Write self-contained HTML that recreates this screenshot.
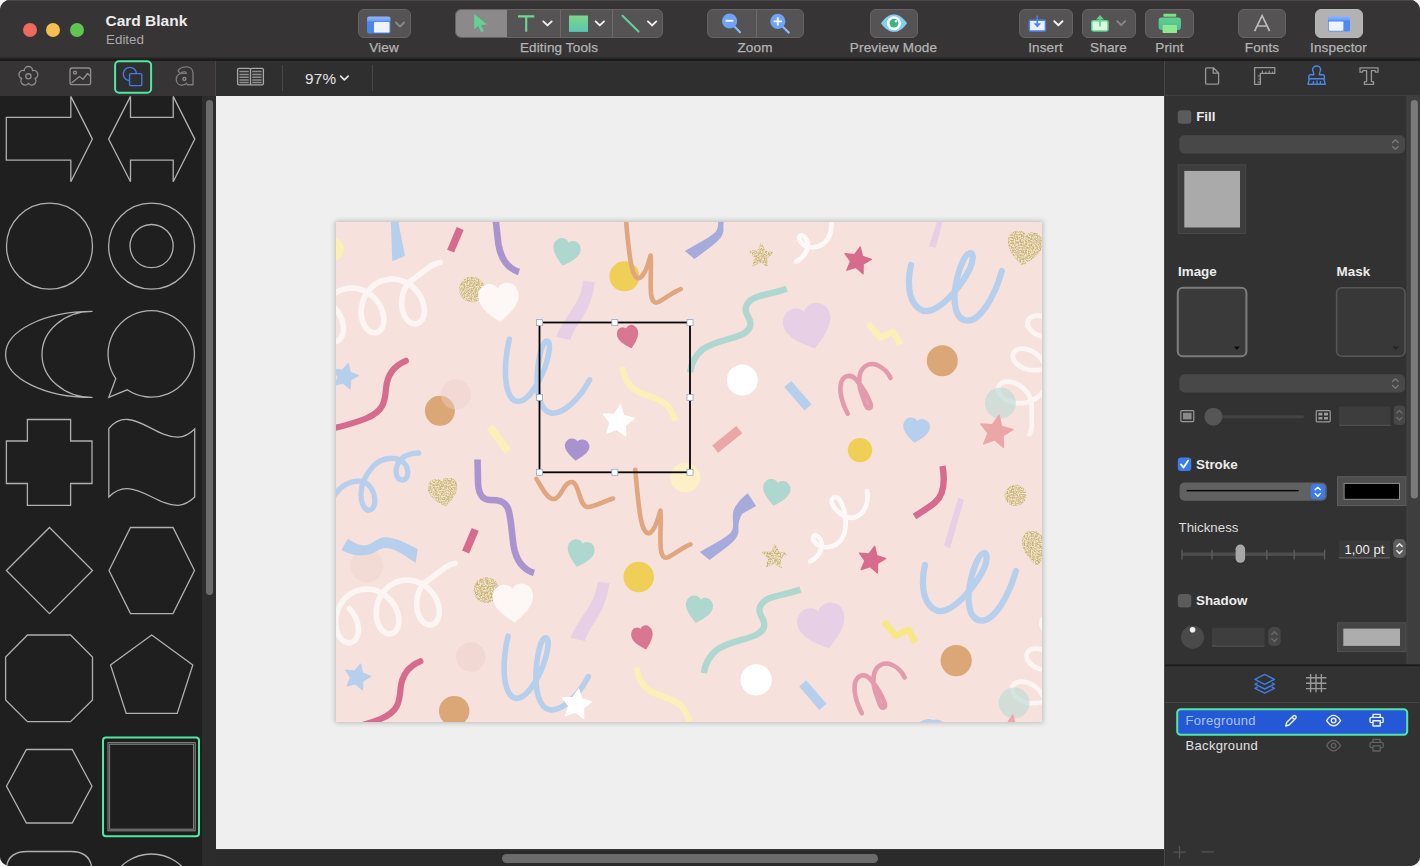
<!DOCTYPE html>
<html>
<head>
<meta charset="utf-8">
<title>Card Blank</title>
<style>
*{box-sizing:border-box;margin:0;padding:0}
html,body{width:1420px;height:866px;overflow:hidden;background:#f4f4f2;font-family:"Liberation Sans",sans-serif;}
#win{position:absolute;left:0;top:0;width:1420px;height:866px;background:#323232;border-radius:10px;overflow:hidden;}
.abs{position:absolute}
/* title bar */
#titlebar{position:absolute;left:0;top:0;width:1420px;height:60.5px;background:linear-gradient(#363435 0,#363435 56.5px,#2a292a 58px,#1b1b1b 59.5px,#1b1b1b 60.5px);box-shadow:inset 0 1px 0 #4a4849;}
.tl{position:absolute;top:22.6px;width:14px;height:14px;border-radius:50%}
#title{position:absolute;left:105.5px;top:12px;font-size:15.5px;font-weight:bold;color:#ececec;letter-spacing:0px}
#subtitle{position:absolute;left:106px;top:31.5px;font-size:13.4px;color:#a9a9a9}
.tbtn{position:absolute;top:9px;height:29px;border-radius:6px;background:#555354;border:1px solid #656364;}
.tlabel{position:absolute;top:40px;font-size:13.5px;letter-spacing:0.15px;-webkit-text-stroke:0.25px #b4b4b4;color:#b4b4b4;text-align:center;width:120px;margin-left:-60px;white-space:nowrap}
.seg{position:absolute;top:0;height:27px;}
.vdiv{position:absolute;top:0;width:1px;height:27px;background:#6d6b6c}
/* second bar */
#bar2{position:absolute;left:0;top:61px;width:1164px;height:35px;background:#363435;border-bottom:1px solid #222;}
/* left */
#left{position:absolute;left:0;top:96px;width:202px;height:770px;background:#201f20;}
#lscroll{position:absolute;left:202px;top:96px;width:14px;height:770px;background:#2c2c2c;}
#canvas{position:absolute;left:216px;top:96px;width:948px;height:753px;background:#efefef;}
#hscroll{position:absolute;left:216px;top:849px;width:948px;height:17px;background:#2b2b2b;border-top:1px solid #383838}
#insp{position:absolute;left:1164px;top:61px;width:256px;height:805px;background:#323232;border-left:1px solid #1e1e1e}
</style>
</head>
<body>
<div id="win">
  <div id="titlebar">
    <div class="tl" style="left:23px;background:#ee6a5f"></div>
    <div class="tl" style="left:46.4px;background:#f5bf4f"></div>
    <div class="tl" style="left:69.7px;background:#61c554"></div>
    <div id="title">Card Blank</div>
    <div id="subtitle">Edited</div>
<!--TB0-->
    <!-- View -->
    <div class="tbtn" style="left:358px;width:53px">
      <svg class="abs" style="left:0;top:0" width="53" height="29" viewBox="358 9 53 29">
        <defs><linearGradient id="gvw" x1="0" y1="0" x2="0" y2="1"><stop offset="0" stop-color="#8fb6fa"/><stop offset="0.28" stop-color="#6a9df6"/><stop offset="0.3" stop-color="#4a86f0"/><stop offset="1" stop-color="#4a86f0"/></linearGradient></defs>
        <rect x="366" y="15.5" width="23.5" height="17" rx="2" fill="url(#gvw)"/>
        <rect x="373" y="21" width="15.5" height="10.5" rx="0.8" fill="#eef3ff"/>
        <path d="M395 21.5 L399 25.5 L403 21.5" fill="none" stroke="#8a8889" stroke-width="1.8" stroke-linecap="round" stroke-linejoin="round"/>
      </svg>
    </div>
    <div class="tlabel" style="left:384px">View</div>
    <!-- Editing tools -->
    <div class="tbtn" style="left:455px;width:208px;overflow:hidden">
      <div class="abs" style="left:0;top:0;width:51px;height:27px;background:#8b898a"></div>
      <div class="vdiv" style="left:104px"></div>
      <div class="vdiv" style="left:156px"></div>
      <svg class="abs" style="left:-1px;top:-1px" width="208" height="29" viewBox="455 9 208 29">
        <defs><linearGradient id="gsq" x1="0" y1="0" x2="0" y2="1"><stop offset="0" stop-color="#7dd88a"/><stop offset="1" stop-color="#5ac4b2"/></linearGradient>
        <linearGradient id="gar" x1="0" y1="0" x2="0" y2="1"><stop offset="0" stop-color="#68d48a"/><stop offset="1" stop-color="#5fcf9c"/></linearGradient></defs>
        <path d="M474.2 14 L474.2 29.5 L478.3 26 L481.2 32.3 L483.9 31.1 L481 25 L487 24.6 Z" fill="url(#gar)"/>
        <path d="M518 16.4 H534.3 M526.2 16.4 V31.8" fill="none" stroke="#6fd993" stroke-width="2.1"/>
        <path d="M543.3 21.4 L547.5 25.4 L551.7 21.4" fill="none" stroke="#f2f2f2" stroke-width="1.9" stroke-linecap="round" stroke-linejoin="round"/>
        <rect x="569" y="15.5" width="19" height="16.4" fill="url(#gsq)"/>
        <path d="M595.6 21.4 L599.8 25.4 L604 21.4" fill="none" stroke="#f2f2f2" stroke-width="1.9" stroke-linecap="round" stroke-linejoin="round"/>
        <path d="M622.5 15.8 L638.5 31.6" fill="none" stroke="#62cf9e" stroke-width="2.1" stroke-linecap="round"/>
        <path d="M647.9 21.4 L652.1 25.4 L656.3 21.4" fill="none" stroke="#f2f2f2" stroke-width="1.9" stroke-linecap="round" stroke-linejoin="round"/>
      </svg>
    </div>
    <div class="tlabel" style="left:559px">Editing Tools</div>
    <!-- Zoom -->
    <div class="tbtn" style="left:707px;width:97px">
      <div class="vdiv" style="left:48px"></div>
      <svg class="abs" style="left:-1px;top:-1px" width="97" height="29" viewBox="707 9 97 29">
        <path d="M734.5 26.5 L740 32.3" stroke="#8db6f8" stroke-width="2.2" stroke-linecap="round"/>
        <circle cx="729.6" cy="21" r="7.6" fill="#6ea3f6"/>
        <path d="M725.6 20.8 H733.4" stroke="#f4f7ff" stroke-width="1.9"/>
        <path d="M783 27 L788.8 32.6" stroke="#8db6f8" stroke-width="2.2" stroke-linecap="round"/>
        <circle cx="777.8" cy="21.4" r="7.6" fill="#6ea3f6"/>
        <path d="M773.6 21.4 H782 M777.8 17.2 V25.6" stroke="#f4f7ff" stroke-width="1.9"/>
      </svg>
    </div>
    <div class="tlabel" style="left:755px">Zoom</div>
    <!-- Preview -->
    <div class="tbtn" style="left:870px;width:48px">
      <svg class="abs" style="left:-1px;top:-1px" width="48" height="29" viewBox="870 9 48 29">
        <path d="M881 23.2 C885.5 17 889.5 14.6 894 14.6 C898.5 14.6 902.5 17 907 23.2 C902.5 29.4 898.5 31.8 894 31.8 C889.5 31.8 885.5 29.4 881 23.2 Z" fill="#86cdf2"/>
        <circle cx="894" cy="23.2" r="7" fill="#f4fbff"/>
        <circle cx="894" cy="23.2" r="4.4" fill="#43b07f"/>
        <circle cx="896" cy="21.3" r="1.3" fill="#e8fff2"/>
      </svg>
    </div>
    <div class="tlabel" style="left:893.5px">Preview Mode</div>
    <!-- Insert -->
    <div class="tbtn" style="left:1019px;width:54px">
      <svg class="abs" style="left:-1px;top:-1px" width="54" height="29" viewBox="1019 9 54 29">
        <rect x="1029.4" y="20.3" width="16" height="10.8" rx="1" fill="#e9f0ff" stroke="#4c84ee" stroke-width="1.5"/>
        <path d="M1037.3 15.5 V25" stroke="#4c84ee" stroke-width="1.6"/>
        <path d="M1033.6 23.2 H1041 L1037.3 27.6 Z" fill="#4c84ee"/>
        <path d="M1054.3 21.2 L1058.4 25.2 L1062.5 21.2" fill="none" stroke="#f2f2f2" stroke-width="1.9" stroke-linecap="round" stroke-linejoin="round"/>
      </svg>
    </div>
    <div class="tlabel" style="left:1045.5px">Insert</div>
    <!-- Share -->
    <div class="tbtn" style="left:1082px;width:54px">
      <svg class="abs" style="left:-1px;top:-1px" width="54" height="29" viewBox="1082 9 54 29">
        <rect x="1091.8" y="20.8" width="16.2" height="10.2" rx="1.4" fill="#d9f9e2" stroke="#62d28c" stroke-width="1.5"/>
        <path d="M1100 18.5 V26.5" stroke="#62d28c" stroke-width="1.7"/>
        <path d="M1096 19.6 H1104 L1100 15 Z" fill="#62d28c"/>
        <path d="M1117.2 21.2 L1121.2 25.2 L1125.2 21.2" fill="none" stroke="#8a8889" stroke-width="1.8" stroke-linecap="round" stroke-linejoin="round"/>
      </svg>
    </div>
    <div class="tlabel" style="left:1108.5px">Share</div>
    <!-- Print -->
    <div class="tbtn" style="left:1145px;width:49px">
      <svg class="abs" style="left:-1px;top:-1px" width="49" height="29" viewBox="1145 9 49 29">
        <defs><linearGradient id="gpr" x1="0" y1="0" x2="0" y2="1"><stop offset="0" stop-color="#62cf8c"/><stop offset="1" stop-color="#4dbb98"/></linearGradient></defs>
        <rect x="1163.4" y="13.8" width="12.8" height="3" rx="0.8" fill="#7fe08c"/>
        <rect x="1158.6" y="17.6" width="22.4" height="12.4" rx="3" fill="url(#gpr)"/>
        <rect x="1162.6" y="25" width="14.4" height="8" rx="0.8" fill="#8dea8e"/>
      </svg>
    </div>
    <div class="tlabel" style="left:1169.5px">Print</div>
    <!-- Fonts -->
    <div class="tbtn" style="left:1238px;width:48px">
      <svg class="abs" style="left:-1px;top:-1px" width="48" height="29" viewBox="1238 9 48 29">
        <path d="M1254.6 31.2 L1262.1 15.6 L1269.6 31.2 M1257.2 26 H1267" fill="none" stroke="#bcbcbc" stroke-width="1.7" stroke-linejoin="miter"/>
      </svg>
    </div>
    <div class="tlabel" style="left:1262px">Fonts</div>
    <!-- Inspector -->
    <div class="tbtn" style="left:1315px;width:48px;background:#b2b2b2;border-color:#b8b8b8">
      <svg class="abs" style="left:-1px;top:-1px" width="48" height="29" viewBox="1315 9 48 29">
        <defs><linearGradient id="gin" x1="0" y1="0" x2="0" y2="1"><stop offset="0" stop-color="#8fb6fa"/><stop offset="0.28" stop-color="#6a9df6"/><stop offset="0.3" stop-color="#4a86f0"/><stop offset="1" stop-color="#4f8df5"/></linearGradient></defs>
        <rect x="1328" y="16" width="22" height="15.5" rx="1.6" fill="url(#gin)"/>
        <rect x="1328.8" y="21.4" width="14.6" height="9.3" rx="0.8" fill="#eef3ff"/>
      </svg>
    </div>
    <div class="tlabel" style="left:1338.5px">Inspector</div>
<!--TB1-->
  </div>
  <div id="bar2">
<!--B20-->
    <svg class="abs" style="left:0;top:0;overflow:visible" width="1420" height="35" viewBox="0 61 1420 35">
      <rect x="0" y="61" width="215" height="35" fill="#363435"/>
      <rect x="216" y="61" width="948" height="35" fill="#2f2f2f"/>
      <rect x="215" y="61" width="1" height="35" fill="#474747"/>
      <!-- flower -->
      <g fill="none" stroke="#8c8c8c" stroke-width="1.4" stroke-linejoin="round">
        <path d="M24.25 70.59 A4.15 4.15 0 0 1 32.55 70.59 A4.15 4.15 0 0 1 35.11 78.48 A4.15 4.15 0 0 1 28.40 83.36 A4.15 4.15 0 0 1 21.69 78.48 A4.15 4.15 0 0 1 24.25 70.59 Z"/>
        <circle cx="28.4" cy="76.3" r="2.6"/>
        <!-- image -->
        <rect x="70" y="68" width="20.6" height="16.6" rx="2.2"/>
        <circle cx="75" cy="72.6" r="1.5"/>
        <path d="M71.5 83 L79.5 76.5 L83 79.3 L87.5 73.5 L90.3 76"/>
        <!-- a -->
        <path d="M178 70.600 C180 67.800 183.600 66.900 186.400 66.900 C190.600 66.900 193 69.600 193 73.200 V84.800 H187.600 L186.600 83.300 C185.200 84.600 183.400 85.200 181.700 85.200 C178.500 85.200 176.300 82.800 176.300 79.500 C176.300 75.700 179 73.400 183 73.400 H186.300 C186.300 72.200 185.500 71.600 184.300 71.600 C182.800 71.600 181.500 72.300 180.200 73.600 Z" stroke="#7a7a7a"/>
        <circle cx="184.400" cy="78.900" r="1.500" stroke="#8a8a8a"/>
      </g>
      <!-- selected shapes -->
      <rect x="115.1" y="61.3" width="36" height="31.5" rx="4" fill="#302f30" stroke="#4fe8a4" stroke-width="2"/>
      <circle cx="129.9" cy="74" r="6.6" fill="none" stroke="#3f7be2" stroke-width="1.4"/>
      <rect x="129.6" y="73.6" width="12.2" height="12" rx="1.2" fill="#302f30" stroke="#3f7be2" stroke-width="1.4"/>
      <!-- book -->
      <g fill="none" stroke="#a9a9a9" stroke-width="1.3">
        <path d="M237.6 69.8 Q237.6 68.4 239 68.4 H249 Q250.5 68.4 250.5 69.8 Q250.5 68.4 252 68.4 H262 Q263.4 68.4 263.4 69.8 V83.4 Q263.4 84.8 262 84.8 H252 Q250.5 84.8 250.5 85.6 Q250.5 84.8 249 84.8 H239 Q237.6 84.8 237.6 83.4 Z"/>
        <path d="M250.5 69.5 V85"/>
      </g>
      <g stroke="#8f8f8f" stroke-width="1.5">
        <path d="M239.4 71.6 H248.8 M239.4 74.4 H248.8 M239.4 77.2 H248.8 M239.4 80 H248.8 M239.4 82.6 H248.8"/>
        <path d="M252.2 71.6 H261.6 M252.2 74.4 H261.6 M252.2 77.2 H261.6 M252.2 80 H261.6 M252.2 82.6 H261.6"/>
      </g>
      <rect x="282" y="65" width="1" height="26" fill="#474747"/>
      <rect x="372" y="65" width="1" height="26" fill="#474747"/>
      <path d="M340.6 76.2 L344.4 79.8 L348.2 76.2" fill="none" stroke="#e4e4e4" stroke-width="1.7" stroke-linecap="round" stroke-linejoin="round"/>
    </svg>
    <div class="abs" style="left:305px;top:8.6px;font-size:15.3px;color:#e4e4e4;letter-spacing:0.2px">97%</div>
<!--B21-->
  </div>
  <div id="left">
<!--S0-->
    <svg class="abs" style="left:0;top:0" width="203" height="770" viewBox="0 96 203 770">
      <g fill="none" stroke="#b0b0b0" stroke-width="1.3" stroke-linejoin="miter">
        <!-- row1 -->
        <path d="M6.3 117.4 H70.8 V96.4 L92.4 139.1 L70.8 181.8 V160.1 H6.3 Z"/>
        <path d="M108.6 139.1 L130.5 96.4 V117.4 H173.2 V96.4 L194.8 139.1 L173.2 181.8 V160.1 H130.5 V181.8 Z"/>
        <!-- row2 -->
        <circle cx="49.5" cy="246.1" r="43"/>
        <circle cx="151.6" cy="246.1" r="43"/>
        <circle cx="151.6" cy="246.1" r="21.6"/>
        <!-- row3 -->
        <path d="M92 311.4 A86.4 43 0 0 0 92 397.4 A50 43 0 0 1 92 311.4 Z" stroke-linejoin="round"/>
        <path d="M115.800 378.600 A43.200 43.200 0 1 1 127.200 389.800 L108.800 397.300 Z"/>
        <!-- row4 -->
        <path d="M27.400 419.500 H70.600 V441 H92 V483.500 H70.600 V505.300 H27.400 V483.500 H6.400 V441 H27.400 Z"/>
        <path d="M108.800 428.500 C115 421 122 419 128 419.500 C145 421 160 437.500 178 437.200 C185 437 190 433.500 194.700 429 V497 C190 501.500 185 505 178 505.300 C160 505.500 145 489.500 128 488.600 C122 488.300 115 490.500 108.800 497 Z"/>
        <!-- row5 -->
        <path d="M49.500 527.500 L92.500 570.500 L49.500 613.600 L6.400 570.500 Z"/>
        <path d="M109 570.500 L130.500 527.500 H173 L194.500 570.500 L173 613.600 H130.500 Z"/>
        <!-- row6 -->
        <path d="M27.500 635 H70.500 L92.500 657 V700 L70.500 721.700 H27.500 L5.600 700 V657 Z"/>
        <path d="M151.700 635 L192.800 665 L177.200 713.400 H126.200 L110.500 665 Z"/>
        <!-- row7 -->
        <path d="M6.500 786.200 L26.400 749.500 H72.200 L92 786.200 L72.200 823 H26.400 Z"/>
        <!-- row8 -->
        <path d="M6 880 V872 Q6 851.500 27 851.500 H71 Q92 851.500 92 872 V880"/>
        <path d="M112 880 A43 43 0 0 1 191 880"/>
      </g>
      <rect x="103" y="737.600" width="96" height="98.600" rx="3" fill="#1f1e1f" stroke="#4fe8a4" stroke-width="2"/>
      <rect x="108.800" y="743.400" width="85.600" height="86.600" fill="none" stroke="#8e8e8e" stroke-width="2.6"/>
      <rect x="108.800" y="743.400" width="85.600" height="86.600" fill="none" stroke="#3a3a3a" stroke-width="0.9"/>
    </svg>
<!--S1-->
  </div>
  <div id="lscroll"><div class="abs" style="left:3.8px;top:3.8px;width:6.8px;height:495px;border-radius:4px;background:#6b6b6b"></div></div>
  <div id="canvas">
<!--C0-->
<div class="abs" style="left:120px;top:125.5px;width:706px;height:500.5px;box-shadow:0 0 5px 1px rgba(0,0,0,0.22);background:#f6e1dd"></div>
<svg class="abs" style="left:120px;top:125.5px" width="706" height="500.5" viewBox="336 221.5 706 500.5">
<defs>
<filter id="gf" x="0" y="0" width="1" height="1" color-interpolation-filters="sRGB">
<feTurbulence type="fractalNoise" baseFrequency="0.55" numOctaves="2" seed="7" result="n"/>
<feColorMatrix in="n" type="matrix" values="0 0 0 0 0.86  0 0 0 0 0.78  0 0 0 0 0.58  1.9 1.9 0 0 -1.5" result="spk"/>
<feTurbulence type="fractalNoise" baseFrequency="0.7" numOctaves="2" seed="23" result="n2"/>
<feColorMatrix in="n2" type="matrix" values="0 0 0 0 0.94  0 0 0 0 0.9  0 0 0 0 0.8  0 2.4 2.4 0 -1.95" result="lt"/>
<feFlood flood-color="#c6ab72" result="base"/>
<feMerge result="m"><feMergeNode in="base"/><feMergeNode in="spk"/><feMergeNode in="lt"/></feMerge>
<feComposite in="m" in2="SourceGraphic" operator="in"/>
</filter>
<clipPath id="cardclip"><rect x="336" y="221.5" width="706" height="500.5"/></clipPath>
</defs>
<rect x="336" y="221.5" width="706" height="500.5" fill="#f6e1dd"/>
<g clip-path="url(#cardclip)">
<circle cx="455.8" cy="394.0" r="15.0" fill="#eed2ca" opacity="0.55"/>
<circle cx="366.8" cy="565.3" r="16.5" fill="#efd2ca" opacity="0.4"/>
<circle cx="470.8" cy="656.6" r="14.8" fill="#efd2ca" opacity="0.55"/>
<circle cx="331.0" cy="248.8" r="12.7" fill="#fdf0b4" />
<polygon points="390.8,221.0 398.3,221.0 405.0,255.5 392.3,260.8" fill="#b6cfec" />
<rect x="451.6" y="227.1" width="7.6" height="24.5" transform="rotate(23.0 455.4 239.3)" fill="#d66b8e"/>
<rect x="466.6" y="528.0" width="7.6" height="24.5" transform="rotate(23.0 470.4 540.3)" fill="#d66b8e"/>
<path d="M477.5 459.0 L478.0 480.0 C478.0 492.0 481.0 499.0 490.0 499.5 C496.0 499.5 504.0 499.0 508.0 508.0 C511.0 516.0 511.5 530.0 513.5 545.0 C516.0 560.0 523.0 569.0 534.0 572.5" fill="none" stroke="#ab93cf" stroke-width="6.6" stroke-linecap="butt" stroke-linejoin="round" />
<path d="M462.5 158.0 L463.0 179.0 C463.0 191.0 466.0 198.0 475.0 198.5 C481.0 198.5 489.0 198.0 493.0 207.0 C496.0 215.0 496.5 229.0 498.5 244.0 C501.0 259.0 508.0 268.0 519.0 271.5" fill="none" stroke="#ab93cf" stroke-width="6.6" stroke-linecap="butt" stroke-linejoin="round" />
<path d="M440.0 261.9 L435.2 263.4 L430.5 265.6 L426.6 268.8 L407.8 282.8 L406.3 285.3 L405.0 287.8 L403.9 290.4 L403.0 293.1 L402.3 295.8 L401.9 298.6 L401.7 301.3 L401.7 303.9 L401.9 306.5 L402.3 309.0 L402.9 311.3 L403.7 313.5 L404.6 315.6 L405.7 317.4 L406.9 319.0 L408.2 320.4 L409.6 321.5 L411.0 322.4 L412.5 323.0 L413.9 323.3 L415.4 323.4 L416.8 323.2 L418.2 322.7 L419.4 322.0 L420.6 321.0 L421.6 319.8 L422.5 318.4 L423.3 316.7 L423.8 314.9 L424.2 312.9 L424.3 310.8 L424.3 308.5 L424.0 306.2 L423.5 303.8 L422.8 301.4 L421.9 299.0 L420.7 296.5 L419.4 294.2 L417.8 291.9 L416.0 289.7 L414.0 287.7 L411.9 285.8 L409.6 284.1 L407.1 282.6 L404.6 281.3 L401.9 280.3 L399.2 279.5 L396.4 278.9 L393.6 278.6 L390.8 278.6 L388.0 278.9 L385.2 279.4 L382.5 280.2 L379.9 281.2 L377.4 282.5 L375.0 284.0 L372.8 285.8 L370.7 287.8 L368.8 289.9 L367.1 292.2 L365.6 294.6 L364.3 297.2 L363.2 299.8 L362.4 302.5 L361.8 305.2 L361.4 308.0 L361.2 310.7 L361.2 313.3 L361.5 315.9 L361.9 318.4 L362.6 320.7 L363.4 322.9 L364.3 324.8 L365.4 326.6 L366.6 328.2 L367.9 329.5 L369.3 330.6 L370.7 331.5 L372.2 332.0 L373.7 332.3 L375.1 332.3 L376.5 332.1 L377.9 331.6 L379.1 330.8 L380.3 329.8 L381.3 328.6 L382.2 327.1 L382.9 325.4 L383.4 323.6 L383.7 321.6 L383.9 319.4 L383.8 317.1 L383.5 314.8 L383.0 312.4 L382.2 310.0 L381.2 307.5 L380.0 305.1 L378.6 302.8 L377.0 300.5 L375.2 298.4 L373.2 296.4 L371.0 294.5 L368.7 292.8 L366.2 291.4 L363.7 290.1 L361.0 289.1 L358.3 288.3 L355.5 287.8 L352.7 287.6 L349.8 287.6 L347.0 287.9 L344.3 288.5 L341.6 289.3 L339.0 290.4 L336.5 291.7 L334.1 293.3 L331.9 295.1 L329.9 297.1 L328.0 299.2 L326.4 301.6 L324.9 304.0 L323.6 306.6 L322.6 309.2 L321.8 311.9 L321.2 314.7 L320.8 317.4 L320.7 320.1 L320.8 322.7 L321.1 325.3 L321.5 327.7 L322.2 330.0 L323.0 332.2 L324.0 334.1 L325.1 335.9 L326.3 337.4 L327.7 338.7 L329.1 339.7 L330.5 340.5 L332.0 341.1 L333.4 341.3 L334.9 341.3 L336.3 341.0 L337.6 340.5 L338.8 339.7 L340.0 338.6 L341.0 337.3 L341.8 335.8 L342.5 334.1 L343.0 332.2 L343.3 330.2 L343.4 328.0 L343.3 325.7 L342.9 323.4 L342.4 321.0 L341.6 318.6 L340.6 316.1 L339.3 313.7 L337.9 311.4 L336.2 309.2 L334.4 307.0" fill="none" stroke="#fdf5f3" stroke-width="5.6" stroke-linecap="round" stroke-linejoin="round" />
<path d="M455.0 562.9 L450.2 564.4 L445.5 566.6 L441.6 569.8 L422.8 583.8 L421.3 586.3 L420.0 588.8 L418.9 591.4 L418.0 594.1 L417.3 596.8 L416.9 599.6 L416.7 602.3 L416.7 604.9 L416.9 607.5 L417.3 610.0 L417.9 612.3 L418.7 614.5 L419.6 616.6 L420.7 618.4 L421.9 620.0 L423.2 621.4 L424.6 622.5 L426.0 623.4 L427.5 624.0 L428.9 624.3 L430.4 624.4 L431.8 624.2 L433.2 623.7 L434.4 623.0 L435.6 622.0 L436.6 620.8 L437.5 619.4 L438.3 617.7 L438.8 615.9 L439.2 613.9 L439.3 611.8 L439.3 609.5 L439.0 607.2 L438.5 604.8 L437.8 602.4 L436.9 600.0 L435.7 597.5 L434.4 595.2 L432.8 592.9 L431.0 590.7 L429.0 588.7 L426.9 586.8 L424.6 585.1 L422.1 583.6 L419.6 582.3 L416.9 581.3 L414.2 580.5 L411.4 579.9 L408.6 579.6 L405.8 579.6 L403.0 579.9 L400.2 580.4 L397.5 581.2 L394.9 582.2 L392.4 583.5 L390.0 585.0 L387.8 586.8 L385.7 588.8 L383.8 590.9 L382.1 593.2 L380.6 595.6 L379.3 598.2 L378.2 600.8 L377.4 603.5 L376.8 606.2 L376.4 609.0 L376.2 611.7 L376.2 614.3 L376.5 616.9 L376.9 619.4 L377.6 621.7 L378.4 623.9 L379.3 625.8 L380.4 627.6 L381.6 629.2 L382.9 630.5 L384.3 631.6 L385.7 632.5 L387.2 633.0 L388.7 633.3 L390.1 633.3 L391.5 633.1 L392.9 632.6 L394.1 631.8 L395.3 630.8 L396.3 629.6 L397.2 628.1 L397.9 626.4 L398.4 624.6 L398.7 622.6 L398.9 620.4 L398.8 618.1 L398.5 615.8 L398.0 613.4 L397.2 611.0 L396.2 608.5 L395.0 606.1 L393.6 603.8 L392.0 601.5 L390.2 599.4 L388.2 597.4 L386.0 595.5 L383.7 593.8 L381.2 592.4 L378.7 591.1 L376.0 590.1 L373.3 589.3 L370.5 588.8 L367.7 588.6 L364.8 588.6 L362.0 588.9 L359.3 589.5 L356.6 590.3 L354.0 591.4 L351.5 592.7 L349.1 594.3 L346.9 596.1 L344.9 598.1 L343.0 600.2 L341.4 602.6 L339.9 605.0 L338.6 607.6 L337.6 610.2 L336.8 612.9 L336.2 615.7 L335.8 618.4 L335.7 621.1 L335.8 623.7 L336.1 626.3 L336.5 628.7 L337.2 631.0 L338.0 633.2 L339.0 635.1 L340.1 636.9 L341.3 638.4 L342.7 639.7 L344.1 640.7 L345.5 641.5 L347.0 642.1 L348.4 642.3 L349.9 642.3 L351.3 642.0 L352.6 641.5 L353.8 640.7 L355.0 639.6 L356.0 638.3 L356.8 636.8 L357.5 635.1 L358.0 633.2 L358.3 631.2 L358.4 629.0 L358.3 626.7 L357.9 624.4 L357.4 622.0 L356.6 619.6 L355.6 617.1 L354.3 614.7 L352.9 612.4 L351.2 610.2 L349.4 608.0" fill="none" stroke="#fdf5f3" stroke-width="5.6" stroke-linecap="round" stroke-linejoin="round" />
<path d="M1029.6 433.7 L1031.1 429.6 L1031.9 425.2 L1031.7 420.9 L1031.6 400.4 L1030.7 398.1 L1029.6 395.9 L1028.3 393.7 L1026.9 391.7 L1025.4 389.9 L1023.7 388.2 L1021.9 386.6 L1020.0 385.2 L1018.1 384.0 L1016.1 383.1 L1014.2 382.3 L1012.3 381.7 L1010.4 381.3 L1008.5 381.1 L1006.8 381.1 L1005.2 381.3 L1003.7 381.7 L1002.3 382.2 L1001.1 382.9 L1000.1 383.8 L999.3 384.7 L998.7 385.8 L998.4 387.0 L998.2 388.3 L998.3 389.6 L998.6 391.0 L999.1 392.3 L999.9 393.7 L1000.9 395.0 L1002.1 396.3 L1003.5 397.5 L1005.1 398.7 L1006.9 399.7 L1008.8 400.6 L1010.9 401.3 L1013.1 401.9 L1015.3 402.4 L1017.7 402.6 L1020.1 402.7 L1022.5 402.6 L1025.0 402.2 L1027.4 401.7 L1029.8 401.0 L1032.1 400.1 L1034.3 398.9 L1036.4 397.6 L1038.4 396.1 L1040.2 394.5 L1041.9 392.7 L1043.4 390.7 L1044.7 388.6 L1045.7 386.4 L1046.6 384.1 L1047.2 381.7 L1047.6 379.3 L1047.7 376.9 L1047.7 374.4 L1047.4 371.9 L1046.9 369.5 L1046.1 367.1 L1045.2 364.8 L1044.1 362.6 L1042.8 360.5 L1041.3 358.5 L1039.8 356.6 L1038.1 354.9 L1036.3 353.4 L1034.4 352.1 L1032.5 350.9 L1030.5 350.0 L1028.6 349.2 L1026.6 348.6 L1024.7 348.3 L1022.9 348.1 L1021.2 348.1 L1019.6 348.4 L1018.1 348.8 L1016.8 349.3 L1015.6 350.1 L1014.7 350.9 L1013.9 351.9 L1013.3 353.1 L1013.0 354.3 L1012.9 355.5 L1013.0 356.9 L1013.4 358.2 L1013.9 359.6 L1014.7 360.9 L1015.8 362.3 L1017.0 363.6 L1018.4 364.8 L1020.1 365.9 L1021.8 366.9 L1023.8 367.7 L1025.9 368.5 L1028.1 369.1 L1030.4 369.5 L1032.8 369.7 L1035.2 369.7 L1037.6 369.6 L1040.1 369.2 L1042.5 368.7 L1044.8 367.9 L1047.1 366.9 L1049.4 365.8 L1051.4 364.4 L1053.4 362.9 L1055.2 361.2 L1056.8 359.4 L1058.3 357.4 L1059.5 355.3 L1060.5 353.1 L1061.4 350.8 L1061.9 348.4 L1062.3 346.0 L1062.4 343.5 L1062.3 341.0 L1062.0 338.6 L1061.4 336.1 L1060.7 333.8 L1059.7 331.5 L1058.6 329.3 L1057.2 327.2 L1055.8 325.2 L1054.2 323.4 L1052.5 321.7 L1050.6 320.2 L1048.8 318.9 L1046.8 317.8 L1044.9 316.9 L1042.9 316.1 L1041.0 315.6 L1039.1 315.3 L1037.3 315.1 L1035.6 315.2 L1034.0 315.5 L1032.6 315.9 L1031.3 316.5 L1030.1 317.2 L1029.2 318.1 L1028.5 319.2 L1027.9 320.3 L1027.6 321.5 L1027.6 322.8 L1027.7 324.1 L1028.1 325.5 L1028.7 326.8 L1029.6 328.2 L1030.6 329.5 L1031.9 330.8 L1033.3 332.0 L1035.0 333.1 L1036.8 334.1 L1038.8 334.9 L1040.9 335.6 L1043.1 336.2 L1045.4 336.5 L1047.8 336.7 L1050.2 336.8 L1052.7 336.6" fill="none" stroke="#fdf5f3" stroke-width="4.7" stroke-linecap="round" stroke-linejoin="round" />
<path d="M1043.4 733.7 L1044.9 729.6 L1045.7 725.2 L1045.5 720.9 L1045.4 700.4 L1044.5 698.1 L1043.4 695.9 L1042.1 693.7 L1040.7 691.7 L1039.2 689.9 L1037.5 688.2 L1035.7 686.6 L1033.8 685.2 L1031.9 684.0 L1029.9 683.1 L1028.0 682.3 L1026.1 681.7 L1024.2 681.3 L1022.3 681.1 L1020.6 681.1 L1019.0 681.3 L1017.5 681.7 L1016.1 682.2 L1014.9 682.9 L1013.9 683.8 L1013.1 684.7 L1012.5 685.8 L1012.2 687.0 L1012.0 688.3 L1012.1 689.6 L1012.4 691.0 L1012.9 692.3 L1013.7 693.7 L1014.7 695.0 L1015.9 696.3 L1017.3 697.5 L1018.9 698.7 L1020.7 699.7 L1022.6 700.6 L1024.7 701.3 L1026.9 701.9 L1029.1 702.4 L1031.5 702.6 L1033.9 702.7 L1036.3 702.6 L1038.8 702.2 L1041.2 701.7 L1043.6 701.0 L1045.9 700.1 L1048.1 698.9 L1050.2 697.6 L1052.2 696.1 L1054.0 694.5 L1055.7 692.7 L1057.2 690.7 L1058.5 688.6 L1059.5 686.4 L1060.4 684.1 L1061.0 681.7 L1061.4 679.3 L1061.5 676.9 L1061.5 674.4 L1061.2 671.9 L1060.7 669.5 L1059.9 667.1 L1059.0 664.8 L1057.9 662.6 L1056.6 660.5 L1055.1 658.5 L1053.6 656.6 L1051.9 654.9 L1050.1 653.4 L1048.2 652.1 L1046.3 650.9 L1044.3 650.0 L1042.4 649.2 L1040.4 648.6 L1038.5 648.3 L1036.7 648.1 L1035.0 648.1 L1033.4 648.4 L1031.9 648.8 L1030.6 649.3 L1029.4 650.1 L1028.5 650.9 L1027.7 651.9 L1027.1 653.1 L1026.8 654.3 L1026.7 655.5 L1026.8 656.9 L1027.2 658.2 L1027.7 659.6 L1028.5 660.9 L1029.6 662.3 L1030.8 663.6 L1032.2 664.8 L1033.9 665.9 L1035.6 666.9 L1037.6 667.7 L1039.7 668.5 L1041.9 669.1 L1044.2 669.5 L1046.6 669.7 L1049.0 669.7 L1051.4 669.6 L1053.9 669.2 L1056.3 668.7 L1058.6 667.9 L1060.9 666.9 L1063.2 665.8 L1065.2 664.4 L1067.2 662.9 L1069.0 661.2 L1070.6 659.4 L1072.1 657.4 L1073.3 655.3 L1074.3 653.1 L1075.2 650.8 L1075.7 648.4 L1076.1 646.0 L1076.2 643.5 L1076.1 641.0 L1075.8 638.6 L1075.2 636.1 L1074.5 633.8 L1073.5 631.5 L1072.4 629.3 L1071.0 627.2 L1069.6 625.2 L1068.0 623.4 L1066.3 621.7 L1064.4 620.2 L1062.6 618.9 L1060.6 617.8 L1058.7 616.9 L1056.7 616.1 L1054.8 615.6 L1052.9 615.3 L1051.1 615.1 L1049.4 615.2 L1047.8 615.5 L1046.4 615.9 L1045.1 616.5 L1043.9 617.2 L1043.0 618.1 L1042.3 619.2 L1041.7 620.3 L1041.4 621.5 L1041.4 622.8 L1041.5 624.1 L1041.9 625.5 L1042.5 626.8 L1043.4 628.2 L1044.4 629.5 L1045.7 630.8 L1047.1 632.0 L1048.8 633.1 L1050.6 634.1 L1052.6 634.9 L1054.7 635.6 L1056.9 636.2 L1059.2 636.5 L1061.6 636.7 L1064.0 636.8 L1066.5 636.6" fill="none" stroke="#fdf5f3" stroke-width="4.7" stroke-linecap="round" stroke-linejoin="round" />
<circle cx="471.9" cy="289.0" r="12.8" fill="#d9bd7e" filter="url(#gf)" />
<path d="M 500.1 320.3 C 494.0 316.0 480.0 307.9 479.2 297.0 C 478.7 289.4 483.8 284.9 488.7 284.6 C 492.8 284.3 496.2 286.3 498.0 290.0 C 499.3 286.1 502.4 283.6 506.4 283.3 C 511.4 283.0 517.1 286.7 517.6 294.3 C 518.4 305.2 505.6 315.2 500.1 320.3 Z" fill="#fdf7f5" stroke="#fdf7f5" stroke-width="2" stroke-linejoin="round" />
<circle cx="486.4" cy="589.6" r="12.8" fill="#d9bd7e" filter="url(#gf)" />
<path d="M 514.6 620.9 C 508.5 616.6 494.5 608.5 493.7 597.6 C 493.2 590.0 498.3 585.5 503.2 585.2 C 507.3 584.9 510.7 586.9 512.5 590.6 C 513.8 586.7 516.9 584.2 520.9 583.9 C 525.9 583.6 531.6 587.3 532.1 594.9 C 532.9 605.8 520.1 615.8 514.6 620.9 Z" fill="#fdf7f5" stroke="#fdf7f5" stroke-width="2" stroke-linejoin="round" />
<polygon points="348.3,362.9 350.2,371.7 358.5,375.1 350.7,379.6 350.1,388.5 343.4,382.5 334.7,384.7 338.3,376.5 333.6,368.8 342.5,369.7" fill="#b6cfec" stroke="#b6cfec" stroke-width="1.2" stroke-linejoin="round" />
<polygon points="360.6,663.7 362.5,672.5 370.8,675.9 363.0,680.4 362.4,689.3 355.7,683.3 347.0,685.5 350.6,677.3 345.9,669.6 354.8,670.5" fill="#b6cfec" stroke="#b6cfec" stroke-width="1.2" stroke-linejoin="round" />
<path d="M405.8 360.3 C392.0 366.0 387.0 376.0 386.0 388.0 C385.0 402.0 383.0 411.0 366.0 418.0 C352.0 423.5 344.0 425.5 330.0 428.5 " fill="none" stroke="#d66b8e" stroke-width="6.2" stroke-linecap="round" stroke-linejoin="round" />
<path d="M420.3 660.8 C406.5 666.5 401.5 676.5 400.5 688.5 C399.5 702.5 397.5 711.5 380.5 718.5 C366.5 724.0 358.5 726.0 344.5 729.0 " fill="none" stroke="#d66b8e" stroke-width="6.2" stroke-linecap="round" stroke-linejoin="round" />
<circle cx="439.9" cy="410.3" r="15.0" fill="#dca777" />
<circle cx="454.2" cy="710.6" r="15.2" fill="#dca777" />
<circle cx="455.8" cy="394.0" r="15.0" fill="#f3ddd6" opacity="0.35"/>
<rect x="494.9" y="423.4" width="8.0" height="30.5" transform="rotate(-36.0 498.9 438.6)" fill="#fdefb8"/>
<path d="M418.6 452.5 C410 452.5 402 456 398.5 462 C394 470 396 479.5 402.5 479.5 C409 479.5 409.5 468 404 462.5 C397 455.5 382 456.5 373.5 465.5 C366 473.5 360.5 484 361 495 C361.5 506 366.5 511.5 371 509 C377 505.5 375.5 492 369 485 C361.5 477 346 480.5 337 491.5 L332 498" fill="none" stroke="#b6cfec" stroke-width="5.3" stroke-linecap="round" stroke-linejoin="round" />
<path d="M 445.2 504.9 C 440.5 502.1 429.9 497.0 428.8 489.1 C 428.0 483.6 431.5 480.1 435.1 479.6 C 438.0 479.2 440.6 480.5 442.1 483.1 C 442.8 480.2 445.0 478.2 447.9 477.8 C 451.5 477.3 455.8 479.7 456.5 485.2 C 457.6 493.1 448.9 501.0 445.2 504.9 Z" fill="#d9bd7e" filter="url(#gf)" stroke="#d9bd7e" stroke-width="2" stroke-linejoin="round" />
<path d="M341.300 549.500 L348 538.300 C355 543 361 546 367 544.500 C373 543 378 537 385 536.800 C396 537 407 543 417.800 548.800 L415.600 562.300 C406 556 398 550 390 548 C384 546.500 381 548 376 551 C371 554 364 555.500 357 554.800 C351 554 346 552 341.300 549.500 Z" fill="#b6cfec"/>
<path d="M 562.9 264.0 C 560.0 260.0 552.8 251.9 554.6 244.7 C 555.8 239.8 560.0 238.0 563.2 238.8 C 565.8 239.4 567.5 241.4 567.9 244.1 C 569.5 241.9 572.0 241.0 574.6 241.6 C 577.8 242.4 580.6 246.0 579.3 250.9 C 577.6 258.0 567.4 261.8 562.9 264.0 Z" fill="#aed7cf" stroke="#aed7cf" stroke-width="2" stroke-linejoin="round" />
<circle cx="624.4" cy="275.8" r="15.0" fill="#efcf55" />
<circle cx="638.7" cy="576.5" r="15.2" fill="#efcf55" />
<path d="M625.5 214.0 C627.0 232.0 628.5 250.0 631.0 263.0 C633.0 273.0 636.0 279.5 640.5 277.0 C646.0 273.5 648.5 262.0 650.6 255.0 C651.5 266.0 650.0 282.0 651.0 293.0 C651.8 300.0 654.0 303.5 658.5 301.5 C666.0 297.5 673.0 291.5 680.7 288.6 " fill="none" stroke="#e0a67e" stroke-width="4.6" stroke-linecap="round" stroke-linejoin="round" />
<path d="M635.3 469.2 C636.8 487.2 638.3 505.2 640.8 518.2 C642.8 528.2 645.8 534.7 650.3 532.2 C655.8 528.7 658.3 517.2 660.4 510.2 C661.3 521.2 659.8 537.2 660.8 548.2 C661.6 555.2 663.8 558.7 668.3 556.7 C675.8 552.7 682.8 546.7 690.5 543.8 " fill="none" stroke="#e0a67e" stroke-width="4.6" stroke-linecap="round" stroke-linejoin="round" />
<path d="M536.5 478.5 C541 485 546 497.5 553 498.5 C561 499.5 563 481.5 571.5 481.5 C579 481.5 579 504 586.5 506.3 C592 508 603 501 613 498" fill="none" stroke="#e0a67e" stroke-width="4.6" stroke-linecap="round" stroke-linejoin="round" />
<path d="M583.0 280.3 L594.8 281.8 C593.0 297.0 589.0 306.0 583.0 316.0 C577.0 326.0 573.0 331.0 570.3 339.6 L556.0 336.6 C560.0 326.0 566.0 318.0 572.0 309.0 C578.0 300.0 582.0 292.0 583.0 280.3 Z" fill="#e7d0e6"/>
<path d="M597.5 581.3 L609.3 582.8 C607.5 598.0 603.5 607.0 597.5 617.0 C591.5 627.0 587.5 632.0 584.8 640.6 L570.5 637.6 C574.5 627.0 580.5 619.0 586.5 610.0 C592.5 601.0 596.5 593.0 597.5 581.3 Z" fill="#e7d0e6"/>
<path d="M509.3 338.8 C506.0 352.0 504.0 372.0 506.5 385.0 C509.0 397.0 513.0 401.5 519.0 401.0 C529.0 400.0 541.0 380.0 546.5 362.0 C549.5 352.0 551.0 341.0 547.0 340.5 C542.0 340.0 538.5 358.0 537.5 372.0 C536.0 392.0 540.0 410.5 551.0 412.5 C563.0 414.5 580.0 398.0 589.6 379.3 " fill="none" stroke="#b6cfec" stroke-width="5.6" stroke-linecap="round" stroke-linejoin="round" />
<path d="M508.0 635.6 C504.7 648.8 502.7 668.8 505.2 681.8 C507.7 693.8 511.7 698.3 517.7 697.8 C527.7 696.8 539.7 676.8 545.2 658.8 C548.2 648.8 549.7 637.8 545.7 637.3 C540.7 636.8 537.2 654.8 536.2 668.8 C534.7 688.8 538.7 707.3 549.7 709.3 C561.7 711.3 578.7 694.8 588.3 676.1 " fill="none" stroke="#b6cfec" stroke-width="5.6" stroke-linecap="round" stroke-linejoin="round" />
<path d="M 631.2 346.6 C 627.7 344.8 619.7 341.6 618.1 335.6 C 617.0 331.5 619.1 328.5 621.5 327.9 C 623.5 327.3 625.4 328.1 626.7 330.0 C 626.9 327.7 628.2 326.1 630.2 325.5 C 632.6 324.9 635.9 326.4 637.0 330.6 C 638.6 336.5 633.3 343.3 631.2 346.6 Z" fill="#d97792" stroke="#d97792" stroke-width="2" stroke-linejoin="round" />
<path d="M 645.7 647.8 C 642.1 645.8 634.1 642.5 632.4 636.3 C 631.3 632.0 633.3 628.9 635.8 628.3 C 637.8 627.7 639.7 628.6 641.0 630.5 C 641.2 628.2 642.5 626.5 644.5 625.9 C 646.9 625.3 650.2 626.9 651.4 631.2 C 653.0 637.4 647.8 644.3 645.7 647.8 Z" fill="#d97792" stroke="#d97792" stroke-width="2" stroke-linejoin="round" />
<path d="M622.4 366.6 C623.5 376.0 628.0 385.0 636.0 390.0 C647.0 396.5 660.0 397.0 668.0 406.0 C671.5 410.0 673.5 414.5 675.5 420.5 " fill="none" stroke="#fdefb8" stroke-width="6.2" stroke-linecap="butt" stroke-linejoin="round" />
<path d="M636.6 667.1 C637.7 676.5 642.2 685.5 650.2 690.5 C661.2 697.0 674.2 697.5 682.2 706.5 C685.7 710.5 687.7 715.0 689.7 721.0 " fill="none" stroke="#fdefb8" stroke-width="6.2" stroke-linecap="butt" stroke-linejoin="round" />
<polygon points="620.4,404.5 623.8,414.9 634.3,417.9 625.5,424.4 625.8,435.4 617.0,429.0 606.6,432.7 610.0,422.2 603.3,413.6 614.2,413.5" fill="#ffffff" stroke="#ffffff" stroke-width="1.2" stroke-linejoin="round" />
<polygon points="578.6,688.5 581.9,698.4 591.9,701.3 583.5,707.4 583.8,717.9 575.3,711.8 565.5,715.3 568.7,705.4 562.3,697.1 572.7,697.1" fill="#ffffff" stroke="#ffffff" stroke-width="1.2" stroke-linejoin="round" />
<path d="M 575.7 458.9 C 572.6 456.1 565.2 450.4 565.8 444.6 C 566.2 440.6 569.6 438.7 572.5 439.0 C 574.9 439.3 576.7 440.7 577.4 442.8 C 578.5 440.9 580.6 439.8 583.0 440.1 C 585.9 440.4 588.9 443.0 588.4 447.0 C 587.8 452.8 579.4 456.8 575.7 458.9 Z" fill="#a992cf" stroke="#a992cf" stroke-width="2" stroke-linejoin="round" />
<circle cx="685.2" cy="477.0" r="15.0" fill="#fdf0c6" />
<path d="M 577.1 565.1 C 574.2 561.1 567.2 553.0 568.9 545.9 C 570.2 540.9 574.3 539.1 577.4 539.9 C 580.0 540.5 581.7 542.5 582.1 545.2 C 583.7 543.0 586.1 542.0 588.7 542.7 C 591.9 543.5 594.6 547.0 593.4 552.0 C 591.6 559.1 581.6 562.9 577.1 565.1 Z" fill="#aed7cf" stroke="#aed7cf" stroke-width="2" stroke-linejoin="round" />
<path d="M 695.9 621.2 C 692.9 617.4 685.4 609.5 687.0 602.3 C 688.0 597.4 692.1 595.4 695.3 596.1 C 697.9 596.6 699.7 598.6 700.2 601.3 C 701.7 599.0 704.1 597.9 706.8 598.5 C 710.0 599.2 712.9 602.7 711.8 607.6 C 710.3 614.8 700.3 618.9 695.9 621.2 Z" fill="#aed7cf" stroke="#aed7cf" stroke-width="2" stroke-linejoin="round" />
<path d="M 773.9 504.2 C 770.7 500.5 762.9 493.0 764.2 485.9 C 765.0 481.0 769.0 479.0 772.3 479.5 C 774.9 480.0 776.8 481.8 777.4 484.5 C 778.8 482.2 781.2 481.1 783.8 481.6 C 787.1 482.1 790.1 485.5 789.3 490.4 C 788.0 497.5 778.2 501.8 773.9 504.2 Z" fill="#aed7cf" stroke="#aed7cf" stroke-width="2" stroke-linejoin="round" />
<path d="M747.8 492.8 L756.1 505.6 L742.6 513.0 C739.0 518.0 738.0 524.0 738.5 530.0 C738.5 536.0 734.0 541.0 727.5 546.0 L709.5 559.6 L699.8 551.4 L720.0 540.0 C728.0 535.0 732.5 532.5 733.0 526.0 C733.5 519.0 731.0 512.0 736.0 505.0 C739.0 500.5 743.0 496.5 747.8 492.8 Z" fill="#a5acdc"/>
<path d="M732.8 191.8 L741.1 204.6 L727.6 212.0 C724.0 217.0 723.0 223.0 723.5 229.0 C723.5 235.0 719.0 240.0 712.5 245.0 L694.5 258.6 L684.8 250.4 L705.0 239.0 C713.0 234.0 717.5 231.5 718.0 225.0 C718.5 218.0 716.0 211.0 721.0 204.0 C724.0 199.5 728.0 195.5 732.8 191.8 Z" fill="#a5acdc"/>
<polygon points="761.5,242.8 764.6,250.7 773.0,252.1 766.4,257.6 767.7,266.0 760.5,261.4 752.9,265.2 755.0,257.0 749.0,250.9 757.5,250.3" fill="#d9bd7e" filter="url(#gf)" stroke="#d9bd7e" filter="url(#gf)" stroke-width="1.2" stroke-linejoin="round" />
<polygon points="775.2,543.8 778.3,551.7 786.7,553.1 780.1,558.6 781.4,567.0 774.2,562.4 766.6,566.2 768.7,558.0 762.7,551.9 771.2,551.3" fill="#d9bd7e" filter="url(#gf)" stroke="#d9bd7e" filter="url(#gf)" stroke-width="1.2" stroke-linejoin="round" />
<path d="M867.2 490.5 C869.0 500.0 866.0 512.0 856.0 516.5 C846.0 520.5 835.0 510.0 832.0 503.0 C830.0 497.0 836.0 494.0 840.0 500.0 C846.0 509.0 848.0 528.0 842.0 538.0 C836.0 548.0 822.0 549.0 816.0 543.0 C811.0 538.0 813.0 532.0 818.0 536.0 C825.0 542.0 822.0 555.0 810.1 561.0 " fill="none" stroke="#fffaf9" stroke-width="4.6" stroke-linecap="round" stroke-linejoin="round" />
<path d="M853.2 190.5 C855.0 200.0 852.0 212.0 842.0 216.5 C832.0 220.5 821.0 210.0 818.0 203.0 C816.0 197.0 822.0 194.0 826.0 200.0 C832.0 209.0 834.0 228.0 828.0 238.0 C822.0 248.0 808.0 249.0 802.0 243.0 C797.0 238.0 799.0 232.0 804.0 236.0 C811.0 242.0 808.0 255.0 796.1 261.0 " fill="none" stroke="#fffaf9" stroke-width="4.6" stroke-linecap="round" stroke-linejoin="round" />
<polygon points="860.3,246.4 862.4,255.7 871.4,258.8 863.2,263.7 863.1,273.3 855.9,267.0 846.7,269.8 850.5,261.0 845.0,253.2 854.5,254.1" fill="#d66b8e" stroke="#d66b8e" stroke-width="1.2" stroke-linejoin="round" />
<polygon points="874.7,545.7 876.8,555.0 885.8,558.1 877.6,563.0 877.5,572.6 870.3,566.3 861.1,569.1 864.9,560.3 859.4,552.5 868.9,553.4" fill="#d66b8e" stroke="#d66b8e" stroke-width="1.2" stroke-linejoin="round" />
<path d="M800.5 589.0 C790.0 593.0 779.0 594.0 770.0 597.5 C761.0 601.0 757.0 608.0 761.0 615.0 C765.0 622.0 767.0 628.0 757.0 634.0 C745.0 640.0 728.0 641.0 716.0 650.0 C709.0 656.0 705.0 663.0 703.9 672.6 " fill="none" stroke="#aed7cf" stroke-width="6.4" stroke-linecap="butt" stroke-linejoin="round" />
<path d="M786.7 288.3 C776.2 292.3 765.2 293.3 756.2 296.8 C747.2 300.3 743.2 307.3 747.2 314.3 C751.2 321.3 753.2 327.3 743.2 333.3 C731.2 339.3 714.2 340.3 702.2 349.3 C695.2 355.3 691.2 362.3 690.1 371.9 " fill="none" stroke="#aed7cf" stroke-width="6.4" stroke-linecap="butt" stroke-linejoin="round" />
<path d="M 814.5 347.0 C 806.3 343.6 788.0 338.0 784.5 325.9 C 782.1 317.5 787.0 311.1 792.7 309.5 C 797.4 308.2 801.9 309.6 804.8 313.3 C 805.4 308.6 808.4 305.0 813.1 303.7 C 818.8 302.0 826.3 304.8 828.7 313.2 C 832.2 325.3 819.6 339.8 814.5 347.0 Z" fill="#e7d0e6" stroke="#e7d0e6" stroke-width="2" stroke-linejoin="round" />
<path d="M 828.7 646.8 C 820.5 643.4 802.2 637.8 798.7 625.7 C 796.3 617.3 801.2 610.9 806.9 609.3 C 811.6 608.0 816.1 609.4 819.0 613.1 C 819.6 608.4 822.6 604.8 827.3 603.5 C 833.0 601.8 840.5 604.6 842.9 613.0 C 846.4 625.1 833.8 639.6 828.7 646.8 Z" fill="#e7d0e6" stroke="#e7d0e6" stroke-width="2" stroke-linejoin="round" />
<circle cx="742.3" cy="379.5" r="15.5" fill="#ffffff" />
<circle cx="756.2" cy="679.4" r="15.6" fill="#ffffff" />
<rect x="793.2" y="379.7" width="9.4" height="31.0" transform="rotate(-41.0 797.9 395.2)" fill="#b6cfec"/>
<rect x="808.1" y="679.1" width="9.4" height="31.0" transform="rotate(-41.0 812.8 694.6)" fill="#b6cfec"/>
<rect x="722.5" y="423.3" width="9.4" height="31.0" transform="rotate(51.0 727.2 438.8)" fill="#eba6a8"/>
<path d="M847.7 413.3 C842.0 402.0 838.5 390.0 841.5 381.0 C844.0 374.5 851.0 373.5 856.0 379.0 C862.0 386.0 868.0 396.0 870.5 403.0 C872.0 408.0 868.0 410.0 865.5 404.0 C862.0 394.0 858.0 386.0 859.5 376.0 C861.0 366.0 869.0 361.5 877.0 364.5 C883.0 367.0 888.0 372.0 890.5 377.5 " fill="none" stroke="#e39aad" stroke-width="4.6" stroke-linecap="round" stroke-linejoin="round" />
<path d="M861.9 712.8 C856.2 701.5 852.7 689.5 855.7 680.5 C858.2 674.0 865.2 673.0 870.2 678.5 C876.2 685.5 882.2 695.5 884.7 702.5 C886.2 707.5 882.2 709.5 879.7 703.5 C876.2 693.5 872.2 685.5 873.7 675.5 C875.2 665.5 883.2 661.0 891.2 664.0 C897.2 666.5 902.2 671.5 904.7 677.0 " fill="none" stroke="#e39aad" stroke-width="4.6" stroke-linecap="round" stroke-linejoin="round" />
<circle cx="860.0" cy="449.6" r="12.2" fill="#efcf55" />
<polygon points="937.0,221.0 942.6,221.0 935.8,247.3 929.0,245.8" fill="#e7d0e6" />
<polygon points="958.3,497.0 963.9,499.3 950.0,548.0 944.0,545.0" fill="#e7d0e6" />
<path d="M911.0 264.5 C908.0 276.0 908.0 292.0 913.0 301.0 C918.0 310.0 925.0 312.0 932.0 309.5 C946.0 304.0 962.0 284.0 970.0 268.0 C973.0 261.0 974.0 253.0 970.5 252.5 C965.0 252.0 959.0 268.0 956.0 283.0 C953.0 298.0 954.0 318.0 966.0 320.0 C980.0 322.0 995.0 295.0 1001.9 270.5 " fill="none" stroke="#b6cfec" stroke-width="6.2" stroke-linecap="round" stroke-linejoin="round" />
<path d="M925.0 564.5 C922.0 576.0 922.0 592.0 927.0 601.0 C932.0 610.0 939.0 612.0 946.0 609.5 C960.0 604.0 976.0 584.0 984.0 568.0 C987.0 561.0 988.0 553.0 984.5 552.5 C979.0 552.0 973.0 568.0 970.0 583.0 C967.0 598.0 968.0 618.0 980.0 620.0 C994.0 622.0 1009.0 595.0 1015.9 570.5 " fill="none" stroke="#b6cfec" stroke-width="6.2" stroke-linecap="round" stroke-linejoin="round" />
<path d="M 1022.2 264.0 C 1017.9 259.2 1007.6 249.5 1009.0 239.9 C 1009.9 233.2 1015.0 230.2 1019.2 230.8 C 1022.7 231.3 1025.2 233.6 1026.0 237.2 C 1027.8 234.0 1030.8 232.4 1034.3 232.9 C 1038.5 233.5 1042.6 237.8 1041.6 244.5 C 1040.3 254.1 1027.7 260.5 1022.2 264.0 Z" fill="#d9bd7e" filter="url(#gf)" stroke="#d9bd7e" stroke-width="2" stroke-linejoin="round" />
<path d="M 1036.2 564.0 C 1031.9 559.2 1021.6 549.5 1023.0 539.9 C 1023.9 533.2 1029.0 530.2 1033.2 530.8 C 1036.7 531.3 1039.2 533.6 1040.0 537.2 C 1041.8 534.0 1044.8 532.4 1048.3 532.9 C 1052.5 533.5 1056.6 537.8 1055.6 544.5 C 1054.3 554.1 1041.7 560.5 1036.2 564.0 Z" fill="#d9bd7e" filter="url(#gf)" stroke="#d9bd7e" stroke-width="2" stroke-linejoin="round" />
<path d="M868.3 323.0 L880.5 337.4 L893.0 331.0 L900.2 344.0" fill="none" stroke="#fdefb8" stroke-width="6.4" stroke-linecap="butt" stroke-linejoin="round" />
<path d="M883.6 621.0 L895.8 635.4 L908.3 629.0 L915.5 642.0" fill="none" stroke="#f7e881" stroke-width="6.4" stroke-linecap="butt" stroke-linejoin="round" />
<circle cx="942.3" cy="360.2" r="15.5" fill="#dca777" />
<circle cx="956.2" cy="660.1" r="15.6" fill="#dca777" />
<path d="M 914.4 441.1 C 911.1 437.7 903.2 431.0 904.1 424.3 C 904.8 419.7 908.6 417.6 911.8 418.1 C 914.4 418.4 916.3 420.1 917.0 422.5 C 918.3 420.4 920.6 419.3 923.2 419.7 C 926.4 420.1 929.5 423.1 928.9 427.8 C 928.0 434.4 918.5 438.8 914.4 441.1 Z" fill="#b6cfec" stroke="#b6cfec" stroke-width="2" stroke-linejoin="round" />
<circle cx="1000.4" cy="402.6" r="15.5" fill="#bcdad3" opacity="0.62"/>
<circle cx="1014.1" cy="702.3" r="15.4" fill="#bcdad3" opacity="0.62"/>
<polygon points="999.0,414.5 1001.8,425.9 1013.1,429.1 1003.2,435.3 1003.6,447.0 994.6,439.5 983.6,443.5 987.9,432.6 980.7,423.4 992.4,424.2" fill="#eba6a8" stroke="#eba6a8" stroke-width="1.2" stroke-linejoin="round" />
<polygon points="1012.8,714.5 1015.6,725.9 1026.9,729.1 1017.0,735.3 1017.4,747.0 1008.4,739.5 997.4,743.5 1001.7,732.6 994.5,723.4 1006.2,724.2" fill="#eba6a8" stroke="#eba6a8" stroke-width="1.2" stroke-linejoin="round" />
<path d="M942.5 465.5 C945 480 944.5 494 935 502 C928.5 507.5 920.5 512 914.5 516" fill="none" stroke="#d66b8e" stroke-width="6.4" stroke-linecap="butt" stroke-linejoin="round" />
<circle cx="1015.4" cy="494.8" r="10.8" fill="#d9bd7e" filter="url(#gf)" />
<path d="M922 722 C927 719.5 931 719.5 934 722 M930 722 C934 720 938 720 941 722" fill="none" stroke="#b6cfec" stroke-width="3.0" stroke-linecap="round" stroke-linejoin="round" />
</g>
</svg>
<svg class="abs" style="left:0;top:0" width="948" height="754" viewBox="216 96 948 754">
<rect x="539.5" y="322.5" width="150.5" height="149.8" fill="none" stroke="#050505" stroke-width="1.8"/>
<g fill="#ffffff" stroke="#93a7c4" stroke-width="0.8">
<rect x="536.6" y="319.6" width="6" height="6"/><rect x="611.8" y="319.6" width="6" height="6"/><rect x="687" y="319.6" width="6" height="6"/>
<rect x="536.6" y="394.5" width="6" height="6"/><rect x="687" y="394.5" width="6" height="6"/>
<rect x="536.6" y="469.3" width="6" height="6"/><rect x="611.8" y="469.3" width="6" height="6"/><rect x="687" y="469.3" width="6" height="6"/>
</g></svg>
<!--C1-->
  </div>
  <div id="hscroll"><div class="abs" style="left:285.5px;top:3.8px;width:376.5px;height:9px;border-radius:4.5px;background:#6b6b6b"></div></div>
  <div id="insp">
<!--I0-->
    <svg class="abs" style="left:-1px;top:0" width="256" height="805" viewBox="1164 61 256 805" font-family="Liberation Sans, sans-serif">
      <rect x="1164" y="61" width="1" height="805" fill="#474747"/>
      <rect x="1165" y="95" width="255" height="1" fill="#3f3f3f"/>
      <!-- inspector tabs -->
      <g fill="none" stroke="#979797" stroke-width="1.3" stroke-linejoin="round">
        <path d="M1205.6 69 Q1205.6 67.8 1206.8 67.8 H1213.4 L1218.6 73 V83 Q1218.6 84.2 1217.4 84.2 H1206.8 Q1205.6 84.2 1205.6 83 Z M1213.2 68 V73.2 H1218.4"/>
        <path d="M1254.6 67.6 H1274.8 V73.4 H1260.4 V84.4 H1254.6 Z"/>
        <path d="M1262.4 73.2 V70.6 M1265.8 73.2 V71.4 M1269.2 73.2 V70.6 M1272.4 73.2 V71.4 M1260.2 76 H1257.6 M1260.2 79 H1258.4 M1260.2 82 H1257.6" stroke-width="1.1"/>
        <path d="M1360 67.8 H1378 V72.2 H1375.6 L1375 70.6 H1371.4 V81.4 L1373.6 82 V84.4 H1364.4 V82 L1366.6 81.4 V70.6 H1363 L1362.4 72.2 H1360 Z"/>
      </g>
      <g fill="none" stroke="#4a86e8" stroke-width="1.4" stroke-linejoin="round">
        <path d="M1313.800 74.800 C1313.8 72 1312.600 71.400 1312.600 69.600 A4 3.600 0 0 1 1320.600 69.600 C1320.600 71.400 1319.400 72 1319.400 74.800 H1322.600 Q1324.400 74.800 1324.400 76.600 V78.800 H1308.800 V76.600 Q1308.800 74.800 1310.600 74.800 Z"/>
        <path d="M1309.400 78.800 L1308 84.200 H1325.200 L1323.800 78.800 M1313.400 81 V84 M1317 80.400 V84 M1320.400 81 V84"/>
      </g>
      <!-- scrollbar -->
      <rect x="1407" y="96" width="13" height="568.4" fill="#3e3e3e"/>
      <rect x="1406.6" y="96" width="1" height="568.4" fill="#464646"/>
      <rect x="1410.800" y="100" width="7.100" height="398.400" rx="3.500" fill="#7a7a7a"/>
      <!-- Fill -->
      <rect x="1177.800" y="110.200" width="13.500" height="13.500" rx="3.200" fill="#5b5b5b"/>
      <text x="1196.200" y="121.200" font-size="13.4" font-weight="bold" fill="#ececec">Fill</text>
      <rect x="1179.400" y="135.300" width="225.600" height="18.200" rx="5" fill="#484848"/>
      <path d="M1392.600 142.600 L1395.400 139.800 L1398.200 142.600 M1392.600 146.400 L1395.400 149.200 L1398.200 146.400" fill="none" stroke="#777" stroke-width="1.400" stroke-linecap="round" stroke-linejoin="round"/>
      <rect x="1178.200" y="164.800" width="67.500" height="68.700" fill="#3d3d3d" stroke="#484848" stroke-width="1"/>
      <rect x="1184.300" y="170.900" width="55.700" height="56.600" fill="#aaaaaa"/>
      <!-- Image / Mask -->
      <text x="1178" y="275.800" font-size="13.4" font-weight="bold" fill="#ececec">Image</text>
      <text x="1336.600" y="275.800" font-size="13.4" font-weight="bold" fill="#ececec">Mask</text>
      <rect x="1177.800" y="287.800" width="68.600" height="68.400" rx="5" fill="#3a3a3a" stroke="#7b7b7b" stroke-width="2.100"/>
      <path d="M1233.800 346.600 H1239.800 L1236.800 350 Z" fill="#0c0c0c"/>
      <rect x="1336.600" y="287.800" width="68.400" height="68.400" rx="5" fill="#383838" stroke="#565656" stroke-width="1.600"/>
      <path d="M1392.700 346.600 H1398.700 L1395.700 350 Z" fill="#252525"/>
      <rect x="1179.400" y="374.300" width="225.600" height="18.200" rx="5" fill="#484848"/>
      <path d="M1392.600 381.600 L1395.400 378.800 L1398.200 381.600 M1392.600 385.400 L1395.400 388.200 L1398.200 385.400" fill="none" stroke="#777" stroke-width="1.400" stroke-linecap="round" stroke-linejoin="round"/>
      <!-- small icon row -->
      <rect x="1180.800" y="410.600" width="13" height="11" rx="1" fill="none" stroke="#9a9a9a" stroke-width="1.200"/>
      <rect x="1183" y="412.800" width="8.600" height="6.600" fill="#8a8a8a"/>
      <rect x="1214" y="415.300" width="90" height="3" rx="1.500" fill="#434343"/>
      <circle cx="1213.400" cy="416.700" r="9" fill="#565656"/>
      <rect x="1316.200" y="410.600" width="14" height="11.200" rx="1" fill="none" stroke="#9a9a9a" stroke-width="1.200"/>
      <path d="M1318.400 412.800 H1322.400 V415.400 H1318.400 Z M1324 412.800 H1328 V415.400 H1324 Z M1318.400 417 H1322.400 V419.600 H1318.400 Z M1324 417 H1328 V419.600 H1324 Z" fill="#9a9a9a"/>
      <rect x="1339" y="406.600" width="51.500" height="19" fill="#3d3d3d"/>
      <rect x="1339" y="424.800" width="51.500" height="1" fill="#555"/>
      <rect x="1393.700" y="405.400" width="11.500" height="19.600" rx="4" fill="#474747"/>
      <path d="M1396.800 413 L1399.400 410.400 L1402 413 M1396.800 417.400 L1399.400 420 L1402 417.400" fill="none" stroke="#6a6a6a" stroke-width="1.400" stroke-linecap="round" stroke-linejoin="round"/>
      <!-- Stroke -->
      <rect x="1177.800" y="457.400" width="13.500" height="13.500" rx="3.200" fill="#3b7cec"/>
      <path d="M1181 464.400 L1183.600 467.600 L1188.200 460.600" fill="none" stroke="#fff" stroke-width="1.800" stroke-linecap="round" stroke-linejoin="round"/>
      <text x="1196" y="468.600" font-size="13.4" font-weight="bold" fill="#ececec">Stroke</text>
      <rect x="1179.600" y="482.500" width="147.200" height="18.200" rx="5" fill="#616161"/>
      <rect x="1186.600" y="489.900" width="112" height="1.500" fill="#0a0a0a"/>
      <rect x="1310.600" y="484" width="14.500" height="15.300" rx="4" fill="#3b7cec"/>
      <path d="M1315.200 489.800 L1317.800 487.200 L1320.400 489.800 M1315.200 493.600 L1317.800 496.200 L1320.400 493.600" fill="none" stroke="#fff" stroke-width="1.400" stroke-linecap="round" stroke-linejoin="round"/>
      <rect x="1337.500" y="476.800" width="68.400" height="28.800" fill="#4e4e4e" stroke="#5e5e5e" stroke-width="1"/>
      <rect x="1344.100" y="483.400" width="55.400" height="15.900" fill="#000" stroke="#8e8e8e" stroke-width="1"/>
      <!-- Thickness -->
      <text x="1178.600" y="532" font-size="13.300" fill="#dedede">Thickness</text>
      <rect x="1181.600" y="552.400" width="143.400" height="3.600" rx="1.500" fill="#4c4c4c"/>
      <path d="M1182 549.800 V559.400 M1212 549.800 V559.400 M1266.800 549.800 V559.400 M1294.200 549.800 V559.400 M1324.600 549.800 V559.400" stroke="#5c5c5c" stroke-width="1.400"/>
      <rect x="1235.600" y="544.600" width="9.500" height="18.200" rx="4.600" fill="#a7a7a7"/>
      <rect x="1338.900" y="540.500" width="51.100" height="17.400" fill="#3a3a3a"/>
      <rect x="1338.900" y="557.400" width="51.100" height="1" fill="#6a6a6a"/>
      <text x="1344.500" y="554" font-size="13" fill="#f0f0f0">1,00 pt</text>
      <rect x="1393.200" y="539.100" width="12.700" height="18.800" rx="4.500" fill="#5d5d5d"/>
      <path d="M1396.900 546.400 L1399.500 543.800 L1402.100 546.400 M1396.900 550.800 L1399.500 553.400 L1402.100 550.800" fill="none" stroke="#e6e6e6" stroke-width="1.500" stroke-linecap="round" stroke-linejoin="round"/>
      <!-- Shadow -->
      <rect x="1177.800" y="594" width="13.500" height="13.500" rx="3.200" fill="#5b5b5b"/>
      <text x="1196" y="605.400" font-size="13.4" font-weight="bold" fill="#ececec">Shadow</text>
      <circle cx="1192.600" cy="637.200" r="11.500" fill="#4a4a4a"/>
      <circle cx="1192.600" cy="629.800" r="2.800" fill="#f2f2f2"/>
      <rect x="1212" y="627.700" width="52.500" height="18.800" fill="#3e3e3e"/>
      <rect x="1212" y="645.600" width="52.500" height="1" fill="#555"/>
      <rect x="1268.200" y="627.100" width="12.400" height="18.800" rx="4.500" fill="#474747"/>
      <path d="M1271.800 634.400 L1274.400 631.800 L1277 634.400 M1271.800 638.800 L1274.400 641.400 L1277 638.800" fill="none" stroke="#6a6a6a" stroke-width="1.400" stroke-linecap="round" stroke-linejoin="round"/>
      <rect x="1337.500" y="622.800" width="68.400" height="28.800" fill="#444444" stroke="#505050" stroke-width="1"/>
      <rect x="1343.300" y="628.600" width="56.700" height="17.300" fill="#adadad"/>
      <!-- layers section -->
      <rect x="1165" y="664.400" width="255" height="1.800" fill="#1b1b1b"/>
      <g fill="none" stroke="#3f7be2" stroke-width="1.500" stroke-linejoin="round">
        <path d="M1264.700 674.400 L1274.400 679.400 L1264.700 684.400 L1255 679.400 Z"/>
        <path d="M1257.600 682.800 L1255 684.100 L1264.700 689 L1274.400 684.100 L1271.800 682.800"/>
        <path d="M1257.600 687 L1255 688.300 L1264.700 693.200 L1274.400 688.300 L1271.800 687"/>
      </g>
      <path d="M1310.600 674 V692.200 M1316 674 V692.200 M1321.400 674 V692.200 M1306 677.800 H1326.400 M1306 683.200 H1326.400 M1306 688.600 H1326.400" fill="none" stroke="#9a9a9a" stroke-width="1.400"/>
      <rect x="1165" y="702" width="255" height="1" fill="#464646"/>
      <rect x="1177.200" y="709.300" width="230" height="25.400" rx="3.500" fill="#2558d6" stroke="#4fe8a4" stroke-width="2"/>
      <text x="1185.600" y="724.600" font-size="13" fill="#a9c5f2" letter-spacing="0.300">Foreground</text>
      <!-- pencil -->
      <g fill="none" stroke="#eef2ff" stroke-width="1.400" stroke-linejoin="round" stroke-linecap="round">
        <path d="M1285.800 726 L1286.600 722.600 L1293.200 716 Q1294.400 714.800 1295.600 716 Q1296.800 717.200 1295.600 718.400 L1289 725 Z M1292 717.200 L1294.400 719.600"/>
        <!-- eye -->
        <path d="M1326.600 720.600 Q1330 715.400 1333.600 715.400 Q1337.200 715.400 1340.600 720.600 Q1337.200 725.800 1333.600 725.800 Q1330 725.800 1326.600 720.600 Z"/>
        <circle cx="1333.600" cy="720.600" r="2.300"/>
        <!-- printer -->
        <path d="M1373 717.400 V714.400 H1380.200 V717.400 M1373 722.600 H1371.400 Q1370 722.600 1370 721.200 V718.800 Q1370 717.400 1371.400 717.400 H1381.800 Q1383.200 717.400 1383.200 718.800 V721.200 Q1383.200 722.600 1381.800 722.600 H1380.200 M1373 720.800 H1380.200 V726 H1373 Z"/>
      </g>
      <text x="1185.600" y="750" font-size="13" fill="#e2e2e2" letter-spacing="0.300">Background</text>
      <g fill="none" stroke="#626262" stroke-width="1.300" stroke-linejoin="round" stroke-linecap="round">
        <path d="M1326.600 745.600 Q1330 740.400 1333.600 740.400 Q1337.200 740.400 1340.600 745.600 Q1337.200 750.800 1333.600 750.800 Q1330 750.800 1326.600 745.600 Z"/>
        <circle cx="1333.600" cy="745.600" r="2.300"/>
        <path d="M1373 742.400 V739.400 H1380.200 V742.400 M1373 747.600 H1371.400 Q1370 747.600 1370 746.200 V743.800 Q1370 742.400 1371.400 742.400 H1381.800 Q1383.200 742.400 1383.200 743.800 V746.200 Q1383.200 747.600 1381.800 747.600 H1380.200 M1373 745.800 H1380.200 V751 H1373 Z"/>
      </g>
      <path d="M1173.400 852.200 H1185.600 M1179.500 846 V858.400 M1201.600 851.800 H1213.800" stroke="#555" stroke-width="1.300"/>
    </svg>
<!--I1-->
  </div>
</div>
</body>
</html>
